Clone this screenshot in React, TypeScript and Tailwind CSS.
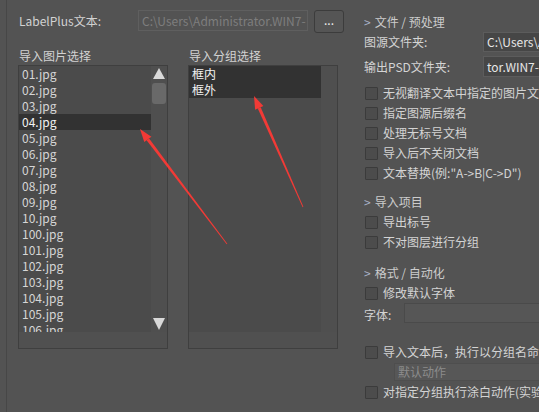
import React from "react";

const font = { fontFamily: '"Noto Sans CJK SC", "Noto Sans", sans-serif' };

const images = [
  "01.jpg", "02.jpg", "03.jpg", "04.jpg", "05.jpg", "06.jpg", "07.jpg", "08.jpg", "09.jpg",
  "10.jpg", "100.jpg", "101.jpg", "102.jpg", "103.jpg", "104.jpg", "105.jpg", "106.jpg",
];

const groups = ["框内", "框外"];

// tapered red arrow from tail to tip
const arrowPoints = (tx: number, ty: number, hx: number, hy: number) => {
  const len = Math.hypot(hx - tx, hy - ty);
  const ux = (hx - tx) / len;
  const uy = (hy - ty) / len;
  const nx = -uy;
  const ny = ux;
  const bx = hx - ux * 13;
  const by = hy - uy * 13;
  const shaft = [
    [tx + nx * 0.4, ty + ny * 0.4],
    [bx + nx * 1.6, by + ny * 1.6],
    [bx - nx * 1.6, by - ny * 1.6],
    [tx - nx * 0.4, ty - ny * 0.4],
  ];
  const head = [
    [hx, hy],
    [bx + nx * 4.5, by + ny * 4.5],
    [bx - nx * 4.5, by - ny * 4.5],
  ];
  const fmt = (p: number[][]) => p.map((q) => q.join(",")).join(" ");
  return { shaft: fmt(shaft), head: fmt(head) };
};

const Arrow = ({ from, to }: { from: [number, number]; to: [number, number] }) => {
  const { shaft, head } = arrowPoints(from[0], from[1], to[0], to[1]);
  return (
    <g fill="#f23a36">
      <polygon points={shaft} />
      <polygon points={head} />
    </g>
  );
};

const ListBox = ({
  items,
  selected,
  arrows,
}: {
  items: string[];
  selected: number[];
  arrows?: boolean;
}) => (
  <div className="w-[150px] h-[284px] border border-[#3f3f3f] flex flex-col">
    <div className="flex h-[266px]">
      <div className="w-[132px] bg-[#4b4b4b] overflow-hidden">
        {items.map((item, i) => (
          <div
            key={item}
            className={`h-[16px] leading-[16px] pl-[3px] text-[12px] ${
              selected.includes(i) ? "bg-[#323232] text-[#f2f2f2]" : "text-[#d6d6d6]"
            }`}
          >
            {item}
          </div>
        ))}
      </div>
      <div className="w-[16px] bg-[#4f4f4f] flex flex-col items-center">
        {arrows && (
          <>
            <svg width="12" height="11" viewBox="0 0 12 11" className="mt-[2px]">
              <polygon points="6,0 12,11 0,11" fill="#d9d9d9" />
            </svg>
            <div className="mt-[4px] w-[14px] h-[21px] rounded-[3px] bg-[#696969]" />
            <svg width="12" height="12" viewBox="0 0 12 12" className="mt-auto mb-[2px]">
              <polygon points="0,0 12,0 6,12" fill="#d9d9d9" />
            </svg>
          </>
        )}
      </div>
    </div>
    <div className="h-[16px] bg-[#505050]" />
  </div>
);

const Check = ({ label }: { label: string }) => (
  <div className="h-[20px] flex items-center">
    <div className="ml-[1px] w-[13px] h-[13px] border border-[#3b3b3b] bg-[#4c4c4c] rounded-[1px] shrink-0" />
    <span className="ml-[5px]">{label}</span>
  </div>
);

const Section = ({ title, className = "" }: { title: string; className?: string }) => (
  <div className={`h-[20px] flex items-center text-[#cccccc] ${className}`}>
    <span className="text-[#a9b1c6] mr-[4px]">&gt;</span>
    {title}
  </div>
);

export default function App() {
  return (
    <div
      className="relative w-[539px] h-[412px] overflow-hidden bg-[#535353] flex text-[12px] text-[#d4d4d4] whitespace-nowrap"
      style={font}
    >
      <div className="w-[6px] shrink-0" />

      {/* left: source text + image/group pickers */}
      <div className="w-[358px] shrink-0 border-l border-[#474747] pl-[11px] pt-[10px]">
        <div className="flex items-start pl-[1px]">
          <div className="w-[119px] h-[21px] leading-[21px] text-[#d2d2d2]">LabelPlus文本:</div>
          <div className="w-[170px] h-[21px] border border-[#5f5f5f] leading-[19px] pl-[3px] text-[#7e7e7e] overflow-hidden">
            C:\Users\Administrator.WIN7-
          </div>
          <button className="ml-[6px] w-[30px] h-[23px] rounded-[3px] border border-[#3c3c3c] bg-[#555555] text-[#eeeeee] text-[12px] leading-[14px] pb-[4px]">
            ...
          </button>
        </div>

        <div className="flex gap-[20px] mt-[15px]">
          <div>
            <div className="h-[17px] leading-[16px] pl-[1px] text-[#d2d2d2]">导入图片选择</div>
            <ListBox items={images} selected={[3]} arrows />
          </div>
          <div>
            <div className="h-[17px] leading-[16px] pl-[1px] text-[#d2d2d2]">导入分组选择</div>
            <ListBox items={groups} selected={[0, 1]} />
          </div>
        </div>
      </div>

      {/* right: options */}
      <div className="flex-1 min-w-0 pt-[12px] overflow-hidden">
        <Section title="文件 / 预处理" className="h-[19px]" />
        <div className="flex items-center h-[20px]">
          <div className="w-[119px] shrink-0">图源文件夹:</div>
          <div className="w-[120px] h-[20px] shrink-0 border border-[#5c5c5c] bg-[#464646] leading-[18px] pl-[3px] text-[#e6e6e6]">
            C:\Users\Administrator
          </div>
        </div>
        <div className="flex items-center h-[21px] mt-[4px]">
          <div className="w-[119px] shrink-0">输出PSD文件夹:</div>
          <div className="w-[120px] h-[21px] shrink-0 border border-[#5c5c5c] bg-[#464646] leading-[19px] pl-[3px] text-[#e6e6e6]">
            tor.WIN7-PC\Desktop
          </div>
        </div>
        <div className="mt-[6px]">
          <Check label="无视翻译文本中指定的图片文件名" />
          <Check label="指定图源后缀名" />
          <Check label="处理无标号文档" />
          <Check label="导入后不关闭文档" />
          <Check label={'文本替换(例:"A->B|C->D")'} />
        </div>

        <Section title="导入项目" className="mt-[9px]" />
        <Check label="导出标号" />
        <Check label="不对图层进行分组" />

        <Section title="格式 / 自动化" className="mt-[11px]" />
        <Check label="修改默认字体" />
        <div className="flex items-center h-[20px]">
          <div className="w-[40px] shrink-0 pt-[4px]">字体:</div>
          <div className="w-[140px] h-[20px] shrink-0 border border-[#4a4a4a] bg-[#565656]" />
        </div>

        <div className="mt-[19px]">
          <Check label="导入文本后，执行以分组名命名的动作" />
        </div>
        <div className="flex items-center h-[20px]">
          <div className="ml-[30px] w-[150px] h-[18px] shrink-0 border border-[#4e4e4e] bg-[#575757] leading-[16px] pl-[3px] text-[#8c8c8c]">
            默认动作
          </div>
        </div>
        <Check label="对指定分组执行涂白动作(实验)" />
      </div>

      <svg className="absolute inset-0 pointer-events-none" width="539" height="412">
        <Arrow from={[227, 244]} to={[140, 129]} />
        <Arrow from={[303, 207]} to={[254, 96]} />
      </svg>
    </div>
  );
}
